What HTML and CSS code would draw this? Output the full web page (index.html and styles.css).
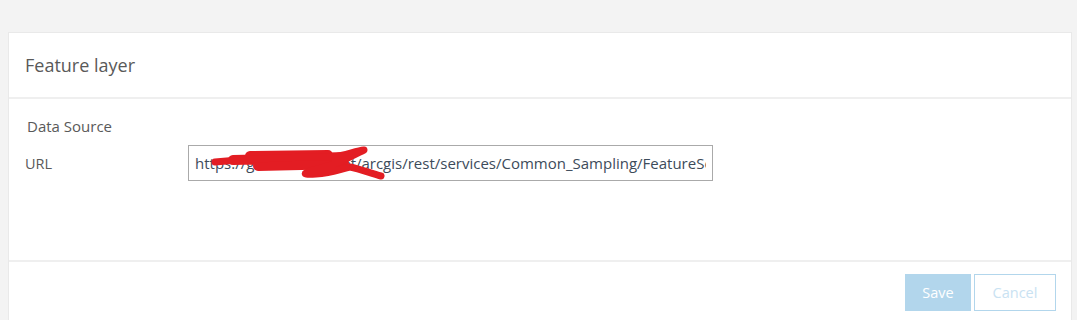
FILE: index.html
```html
<!DOCTYPE html>
<html>
	<head>
		<meta charset="UTF-8">
		<title>Feature layer</title>
		<link rel="stylesheet" href="styles.css">
	</head>
	<body>
		<div class="panel">
			<div class="panel-head">Feature layer</div>
			<div class="panel-body">
				<h4>Data Source</h4>
				<div class="row">
					<label for="url">URL</label>
					<div class="field">
						<input type="text" id="url" value="https://gis.example.net/arcgis/rest/services/Common_Sampling/FeatureServer/0"/>
						<!-- red redaction over the host name -->
						<svg class="scribble" width="200" height="40" viewBox="0 0 200 40">
							<path class="thick" d="M45 15 L158 12 M62 11 L140 10 M70 21 L156 19" />
							<path d="M27 17 C60 14 100 12 145 12 C158 10 168 6 176 5 C168 9 156 16 140 21 C118 27 108 30 128 29 C143 28 153 24 162 22 C172 24 182 28 193 31" />
						</svg>
					</div>
				</div>
			</div>
			<div class="panel-foot">
				<button class="save" disabled>Save</button>
				<button class="cancel" disabled>Cancel</button>
			</div>
		</div>
	</body>
</html>
```

FILE: styles.css
```css
*{
	margin: 0;
	padding: 0;
	box-sizing: border-box;
}
body{
	background: #f3f3f3;
	padding: 32px 5px 0 8px;
	font-family: "Open Sans", "Lato", sans-serif;
	color: #4c4c4c;
	height: 320px;
	overflow: hidden;
}
.panel{
	background: #fff;
	border: 1px solid #e9e9e9;
	border-bottom: none;
	height: 288px;
}
.panel-head{
	height: 66px;
	line-height: 64px;
	padding-left: 16px;
	font-size: 18px;
	color: #595959;
	border-bottom: 2px solid #efefef;
}
.panel-body{
	height: 161px;
	padding: 17px 16px 0 18px;
}
.panel-body h4{
	font-weight: normal;
	font-size: 15px;
	color: #595959;
	margin-bottom: 9px;
}
.row{
	display: flex;
	align-items: center;
}
.row label{
	width: 163px;
	margin-left: -2px;
	font-size: 14.5px;
	color: #595959;
}
.field{
	position: relative;
}
input{
	width: 525px;
	height: 36px;
	border: 1px solid #aaa;
	padding: 0 6px;
	font-family: inherit;
	font-size: 15px;
	color: #3d4b5a;
	outline: none;
}
.scribble{
	position: absolute;
	left: 0;
	top: 0;
}
.scribble path{
	fill: none;
	stroke: #e31d23;
	stroke-width: 7;
	stroke-linecap: round;
	stroke-linejoin: round;
}
.scribble .thick{
	stroke-width: 10;
}
.panel-foot{
	border-top: 2px solid #efefef;
	display: flex;
	justify-content: flex-end;
	gap: 3px;
	padding: 12px 15px 0 0;
}
button{
	height: 37px;
	font-family: inherit;
	font-size: 14.5px;
	border: 1px solid #b2d6ec;
}
.save{
	width: 66px;
	background: #b2d6ec;
	color: #fff;
}
.cancel{
	width: 82px;
	background: #fff;
	color: #c9e2f2;
}
```
